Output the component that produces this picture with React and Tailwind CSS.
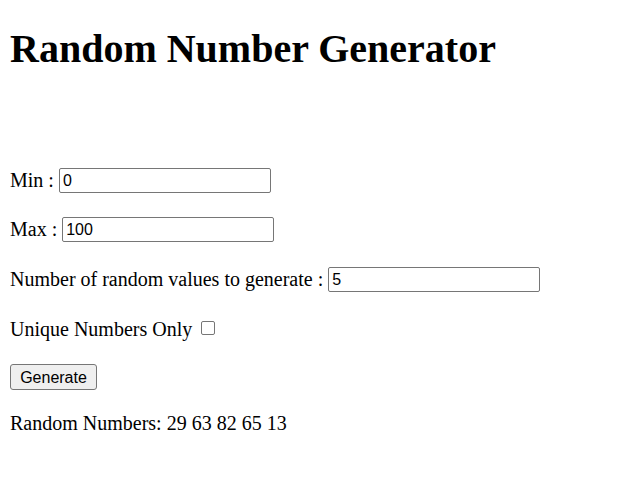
import React, { useState } from "react";

export default function App() {
  const [min, setMin] = useState("0");
  const [max, setMax] = useState("100");
  const [count, setCount] = useState("5");
  const [unique, setUnique] = useState(false);

  const serif = "font-['Liberation_Serif','Times_New_Roman',serif]";
  const sans = "font-['Liberation_Sans',Arial,sans-serif]";
  const inputCls = `${sans} block w-[212px] h-[25px] border border-[#767676] rounded-[2px] bg-white px-[3px] text-[16px] leading-[19px] text-black outline-none`;

  return (
    <div className={`${serif} min-h-[502px] w-[630px] bg-white px-[10px] pt-2 text-[20px] text-black`}>
      <h1 className="mt-[19px] text-[40px] font-bold leading-[44px]">Random Number Generator</h1>

      <div className="mt-[97px] flex h-[25px] items-center">
        <span className="leading-[25px]">Min :</span>
        <input className={`${inputCls} ml-[5px] w-[211px]`} value={min} onChange={(e) => setMin(e.target.value)} />
      </div>

      <div className="mt-[24px] flex h-[25px] items-center">
        <span className="leading-[25px]">Max :</span>
        <input className={`${inputCls} ml-[5px]`} value={max} onChange={(e) => setMax(e.target.value)} />
      </div>

      <div className="mt-[25px] flex h-[25px] items-center">
        <span className="leading-[25px]">Number of random values to generate :</span>
        <input className={`${inputCls} ml-[5px]`} value={count} onChange={(e) => setCount(e.target.value)} />
      </div>

      <div className="mt-[25px] flex h-[25px] items-center">
        <span className="leading-[25px]">Unique Numbers Only</span>
        <button
          type="button"
          role="checkbox"
          aria-checked={unique}
          onClick={() => setUnique(!unique)}
          className="ml-[9px] mt-[4px] h-[14px] w-[14px] shrink-0 self-start rounded-[2px] border border-[#767676] bg-white p-0"
        />
      </div>

      <div className="mt-[22px]">
        <button
          className={`${sans} flex h-[26px] w-[87px] items-center justify-center rounded-[3px] border border-[#767676] bg-[#efefef] text-[16px] leading-[19px] text-black`}
        >
          Generate
        </button>
      </div>

      <div className="mt-[21px] h-[25px] leading-[25px]">Random Numbers: 29 63 82 65 13</div>
    </div>
  );
}
